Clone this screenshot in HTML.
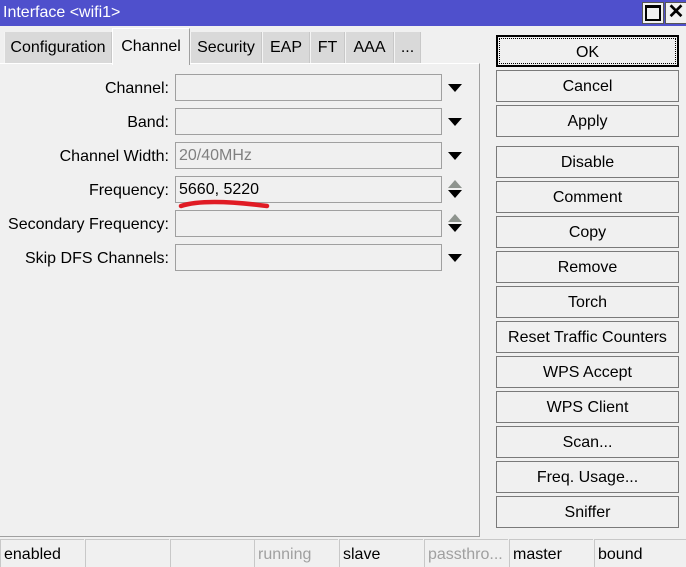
<!DOCTYPE html><html><head><style>
*{box-sizing:border-box;margin:0;padding:0}
body{width:686px;height:567px;background:#f0f0f0;font-family:"Liberation Sans",Arial,sans-serif;font-size:16px;color:#000;position:relative;overflow:hidden}
.a{position:absolute}
.title{left:0;top:0;width:686px;height:26px;background:#4f50cc;color:#fff;padding:4px 0 0 3px;font-size:16px}
.wb{top:2px;width:22px;height:22px;background:#f0f0f0;border:1px solid #555}
.tab{top:32px;height:31px;background:#d9d9d9;border-left:1px solid #f4f4f4;border-right:1px solid #c8c8c8;text-align:center;padding-top:7px}
.panel{left:0;top:63px;width:480px;height:474px;border-top:1px solid #fff;border-right:1px solid #a0a0a0;border-bottom:1px solid #a0a0a0}
.lbl{right:517px;text-align:right;white-space:nowrap}
.box{left:175px;width:267px;height:27px;border:1px solid #a0a0a0;background:#f0f0f0;padding:4px 0 0 3px}
.dn{left:448px;width:0;height:0;border-left:7px solid transparent;border-right:7px solid transparent;border-top:8px solid #000}
.up{left:448px;width:0;height:0;border-left:7px solid transparent;border-right:7px solid transparent;border-bottom:8px solid #8e948e}
.btn{left:496px;width:183px;height:32px;border:1px solid #7a7a7a;background:#f0f0f0;text-align:center;padding-top:7px}
.st{top:539px;height:28px;border-left:1px solid #c8c8c8;border-top:1px solid #c8c8c8;padding:6px 0 0 3px;width:84px}
</style></head><body>
<div class="a title">Interface &lt;wifi1&gt;</div>
<div class="a wb" style="left:642px"><div style="margin:2px;height:16px;border:2px solid #000;border-top-width:3px"></div></div>
<div class="a wb" style="left:665px;font-size:20px;line-height:19px;text-align:center;font-weight:bold">✕</div>
<div class="a tab" style="left:4px;width:108px">Configuration</div>
<div class="a tab" style="left:190px;width:72px">Security</div>
<div class="a tab" style="left:262px;width:48px">EAP</div>
<div class="a tab" style="left:310px;width:35px">FT</div>
<div class="a tab" style="left:345px;width:49px">AAA</div>
<div class="a tab" style="left:394px;width:27px">...</div>
<div class="a panel"></div>
<div class="a" style="left:112px;top:28px;width:78px;height:37px;background:#f0f0f0;border:1px solid #fff;border-right-color:#a0a0a0;border-bottom:none;text-align:center;padding-top:9px">Channel</div>
<div class="a lbl" style="top:80px">Channel:</div><div class="a box" style="top:74px"></div><div class="a dn" style="top:84px"></div>
<div class="a lbl" style="top:114px">Band:</div><div class="a box" style="top:108px"></div><div class="a dn" style="top:118px"></div>
<div class="a lbl" style="top:148px">Channel Width:</div><div class="a box" style="top:142px;color:#808080">20/40MHz</div><div class="a dn" style="top:152px"></div>
<div class="a lbl" style="top:182px">Frequency:</div><div class="a box" style="top:176px">5660, 5220</div><div class="a up" style="top:180px"></div><div class="a dn" style="top:190px"></div>
<svg class="a" style="left:175px;top:198px" width="100" height="14"><path d="M6 8 Q30 0 92 8" stroke="#e01b24" stroke-width="4.5" fill="none" stroke-linecap="round"/></svg>
<div class="a lbl" style="top:216px">Secondary Frequency:</div><div class="a box" style="top:210px"></div><div class="a up" style="top:214px"></div><div class="a dn" style="top:224px"></div>
<div class="a lbl" style="top:250px">Skip DFS Channels:</div><div class="a box" style="top:244px"></div><div class="a dn" style="top:254px"></div>
<div class="a btn" style="top:35px;border:2px solid #000;outline:1px dotted #000;outline-offset:-4px">OK</div>
<div class="a btn" style="top:70px">Cancel</div>
<div class="a btn" style="top:105px">Apply</div>
<div class="a btn" style="top:146px">Disable</div>
<div class="a btn" style="top:181px">Comment</div>
<div class="a btn" style="top:216px">Copy</div>
<div class="a btn" style="top:251px">Remove</div>
<div class="a btn" style="top:286px">Torch</div>
<div class="a btn" style="top:321px">Reset Traffic Counters</div>
<div class="a btn" style="top:356px">WPS Accept</div>
<div class="a btn" style="top:391px">WPS Client</div>
<div class="a btn" style="top:426px">Scan...</div>
<div class="a btn" style="top:461px">Freq. Usage...</div>
<div class="a btn" style="top:496px">Sniffer</div>
<div class="a st" style="left:0">enabled</div>
<div class="a st" style="left:85px"></div>
<div class="a st" style="left:170px"></div>
<div class="a st" style="left:254px;color:#a0a0a0">running</div>
<div class="a st" style="left:339px">slave</div>
<div class="a st" style="left:424px;color:#a0a0a0">passthro...</div>
<div class="a st" style="left:509px">master</div>
<div class="a st" style="left:594px;width:92px">bound</div>
</body></html>
